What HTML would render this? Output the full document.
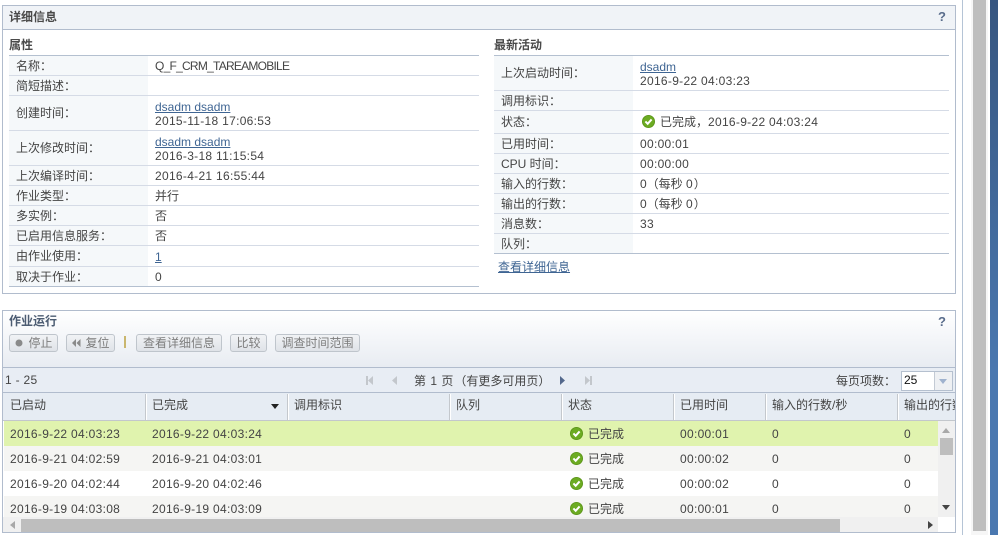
<!DOCTYPE html>
<html lang="zh"><head><meta charset="utf-8"><title>详细信息</title>
<style>
html,body{margin:0;padding:0;background:#fff}
#p{position:relative;width:998px;height:535px;overflow:hidden;background:#fff;font:12px/16px "Liberation Sans","WenQuanYi Zen Hei","Noto Sans CJK SC",sans-serif;color:#444}
#p div,#p a,#p svg{position:absolute}
.t{white-space:nowrap}
.n{letter-spacing:.3px}
a{color:#3f6593;text-decoration:underline}
#p a{position:static}
.b{font-weight:bold;color:#4a4a4a}
.l{height:1px;background:#d5dbe6}
.lm{height:1px;background:#b4c0d0}
.btn{top:334px;height:16px;border:1px solid #bfc5cc;border-radius:3px;background:linear-gradient(#f1f3f5,#dfe3e8);color:#7d7d7d;text-align:center;line-height:17px;white-space:nowrap}
.h{top:393px;height:27px;background:#e6ecf3}
.s{top:394px;width:1px;height:26px;background:#fff;box-shadow:-1px 0 0 #c4c8cd}
.row{left:4px;width:934px;height:25px}
</style></head><body><div id="p">
<!-- right chrome -->
<div style="left:962px;top:0;width:1px;height:535px;background:#b5c4d6"></div>
<div style="left:971px;top:0;width:17px;height:535px;background:#f6f6f6"></div>
<div style="left:973px;top:0;width:13px;height:531px;background:#bebebe"></div>
<div style="left:990px;top:0;width:8px;height:535px;background:linear-gradient(#375680,#4a78b0 70%)"></div>

<!-- panel 1 -->
<div style="left:2px;top:5px;width:952px;height:287px;border:1px solid #b1bccd;background:#fff"></div>
<div style="left:3px;top:6px;width:952px;height:23px;background:#f0f3f7;border-bottom:1px solid #b1bccd"></div>
<div class="t b" style="left:9px;top:9px">详细信息</div>
<div class="t" style="left:938px;top:9px;font-weight:bold;font-size:13px;color:#5a6d8c">?</div>
<div class="t b" style="left:9px;top:37px">属性</div>
<div class="t b" style="left:494px;top:37px">最新活动</div>

<div style="left:9px;top:56px;width:139px;height:230px;background:#f5f8fa"></div>
<div style="left:494px;top:56px;width:139px;height:197px;background:#f5f8fa"></div>

<div class="lm" style="left:9px;top:55px;width:470px"></div>
<div class="l" style="left:9px;top:75px;width:470px"></div>
<div class="l" style="left:9px;top:95px;width:470px"></div>
<div class="l" style="left:9px;top:130px;width:470px"></div>
<div class="l" style="left:9px;top:165px;width:470px"></div>
<div class="l" style="left:9px;top:185px;width:470px"></div>
<div class="l" style="left:9px;top:205px;width:470px"></div>
<div class="l" style="left:9px;top:225px;width:470px"></div>
<div class="l" style="left:9px;top:245px;width:470px"></div>
<div class="l" style="left:9px;top:266px;width:470px"></div>
<div class="lm" style="left:9px;top:286px;width:470px"></div>

<div class="t" style="left:16px;top:58px">名称：</div>
<div class="t" style="left:155px;top:58px;letter-spacing:-.75px">Q_F_CRM_TAREAMOBILE</div>
<div class="t" style="left:16px;top:78px">简短描述：</div>
<div class="t" style="left:16px;top:105px">创建时间：</div>
<div class="t" style="left:155px;top:99px"><a>dsadm dsadm</a></div>
<div class="t n" style="left:155px;top:113px">2015-11-18 17:06:53</div>
<div class="t" style="left:16px;top:140px">上次修改时间：</div>
<div class="t" style="left:155px;top:134px"><a>dsadm dsadm</a></div>
<div class="t n" style="left:155px;top:148px">2016-3-18 11:15:54</div>
<div class="t" style="left:16px;top:168px">上次编译时间：</div>
<div class="t n" style="left:155px;top:168px">2016-4-21 16:55:44</div>
<div class="t" style="left:16px;top:188px">作业类型：</div>
<div class="t" style="left:155px;top:188px">并行</div>
<div class="t" style="left:16px;top:208px">多实例：</div>
<div class="t" style="left:155px;top:208px">否</div>
<div class="t" style="left:16px;top:228px">已启用信息服务：</div>
<div class="t" style="left:155px;top:228px">否</div>
<div class="t" style="left:16px;top:248px">由作业使用：</div>
<div class="t" style="left:155px;top:249px"><a>1</a></div>
<div class="t" style="left:16px;top:269px">取决于作业：</div>
<div class="t" style="left:155px;top:269px">0</div>

<div class="lm" style="left:494px;top:55px;width:455px"></div>
<div class="l" style="left:494px;top:90px;width:455px"></div>
<div class="l" style="left:494px;top:110px;width:455px"></div>
<div class="l" style="left:494px;top:133px;width:455px"></div>
<div class="l" style="left:494px;top:153px;width:455px"></div>
<div class="l" style="left:494px;top:173px;width:455px"></div>
<div class="l" style="left:494px;top:193px;width:455px"></div>
<div class="l" style="left:494px;top:213px;width:455px"></div>
<div class="l" style="left:494px;top:233px;width:455px"></div>
<div class="lm" style="left:494px;top:253px;width:455px"></div>

<div class="t" style="left:501px;top:65px">上次启动时间：</div>
<div class="t" style="left:640px;top:59px"><a>dsadm</a></div>
<div class="t n" style="left:640px;top:73px">2016-9-22 04:03:23</div>
<div class="t" style="left:501px;top:93px">调用标识：</div>
<div class="t" style="left:501px;top:114px">状态：</div>
<svg style="left:642px;top:115px" width="13" height="13" viewBox="0 0 13 13"><circle cx="6.5" cy="6.5" r="6.1" fill="#6cab22" stroke="#5a9418" stroke-width=".8"/><path d="M3.4 6.400l2.300 2.400 3.900-4.400" fill="none" stroke="#fff" stroke-width="2"/></svg>
<div class="t" style="left:660px;top:114px">已完成，<span class="n">2016-9-22 04:03:24</span></div>
<div class="t" style="left:501px;top:136px">已用时间：</div>
<div class="t n" style="left:640px;top:136px">00:00:01</div>
<div class="t" style="left:501px;top:156px">CPU 时间：</div>
<div class="t n" style="left:640px;top:156px">00:00:00</div>
<div class="t" style="left:501px;top:176px">输入的行数：</div>
<div class="t" style="left:640px;top:176px">0（每秒 0<span style="margin-left:1px">）</span></div>
<div class="t" style="left:501px;top:196px">输出的行数：</div>
<div class="t" style="left:640px;top:196px">0（每秒 0<span style="margin-left:1px">）</span></div>
<div class="t" style="left:501px;top:216px">消息数：</div>
<div class="t n" style="left:640px;top:216px">33</div>
<div class="t" style="left:501px;top:236px">队列：</div>
<div class="t" style="left:498px;top:259px"><a>查看详细信息</a></div>

<!-- panel 2 -->
<div style="left:2px;top:310px;width:952px;height:221px;border:1px solid #b1bccd;background:#fff"></div>
<div style="left:3px;top:311px;width:952px;height:56px;background:linear-gradient(#fff,#e8ecf2);border-bottom:1px solid #b1bccd"></div>
<div class="t" style="left:9px;top:313px;font-weight:bold;color:#4c5c72">作业运行</div>
<div class="t" style="left:938px;top:314px;font-weight:bold;font-size:13px;color:#5a6d8c">?</div>

<div class="btn" style="left:9px;width:47px"><span style="margin-left:14px">停止</span></div>
<svg style="left:15px;top:339px" width="8" height="8"><circle cx="4" cy="4" r="3.500" fill="#8a8a8a"/></svg>
<div class="btn" style="left:66px;width:47px"><span style="margin-left:14px">复位</span></div>
<svg style="left:72px;top:339px" width="9" height="8"><path d="M4 0v8L0 4zM8.500 0v8L4.500 4z" fill="#8a8a8a"/></svg>
<div style="left:124px;top:336px;width:2px;height:12px;background:#c9b66e"></div>
<div class="btn" style="left:136px;width:84px">查看详细信息</div>
<div class="btn" style="left:230px;width:35px">比较</div>
<div class="btn" style="left:275px;width:83px">调查时间范围</div>

<div style="left:3px;top:368px;width:952px;height:24px;background:#e8edf4;border-bottom:1px solid #b1bccd"></div>
<div class="t n" style="left:5px;top:372px">1 - 25</div>
<svg style="left:366px;top:376px" width="8" height="9"><path d="M0 0h2v9H0zM7 0v9L2 4.500z" fill="#c3c7cc"/></svg>
<svg style="left:392px;top:376px" width="6" height="9"><path d="M5 0v9L0 4.500z" fill="#c3c7cc"/></svg>
<div class="t" style="left:414px;top:373px">第 <span style="margin:0 1px">1</span> 页<span style="margin-left:1px">（有更多可用页）</span></div>
<svg style="left:560px;top:376px" width="6" height="9"><path d="M0 0v9l5-4.500z" fill="#53688c"/></svg>
<svg style="left:585px;top:376px" width="8" height="9"><path d="M0 0v9l5-4.500zM5 0h2v9H5z" fill="#c3c7cc"/></svg>
<div class="t" style="left:836px;top:373px">每页项数：</div>
<div style="left:901px;top:371px;width:50px;height:18px;border:1px solid #b5c0cf;background:#fff"></div>
<div class="t" style="left:904px;top:372px;color:#111">25</div>
<div style="left:934px;top:372px;width:17px;height:18px;background:#eef0f3;border-left:1px solid #c3cad4"></div>
<svg style="left:939px;top:379px" width="8" height="5"><path d="M0 0h8L4 5z" fill="#9fb2ce"/></svg>

<div class="h" style="left:3px;width:952px"></div>
<div style="left:3px;top:420px;width:952px;height:1px;background:#c3c7cc"></div>
<div class="s" style="left:146px"></div>
<div class="s" style="left:288px"></div>
<div class="s" style="left:450px"></div>
<div class="s" style="left:562px"></div>
<div class="s" style="left:674px"></div>
<div class="s" style="left:766px"></div>
<div class="s" style="left:898px"></div>
<div class="t" style="left:10px;top:397px">已启动</div>
<div class="t" style="left:152px;top:397px">已完成</div>
<svg style="left:271px;top:404px" width="8" height="5"><path d="M0 0h8L4 5z" fill="#222"/></svg>
<div class="t" style="left:294px;top:397px">调用标识</div>
<div class="t" style="left:456px;top:397px">队列</div>
<div class="t" style="left:568px;top:397px">状态</div>
<div class="t" style="left:680px;top:397px">已用时间</div>
<div class="t" style="left:772px;top:397px">输入的行数/秒</div>
<div style="left:904px;top:397px;width:51px;height:16px;overflow:hidden;white-space:nowrap">输出的行数/秒</div>

<div class="row" style="top:421px;background:#e0f3ae"></div>
<div class="row" style="top:446px;background:#f5f5f3"></div>
<div class="row" style="top:471px;background:#fff"></div>
<div class="row" style="top:496px;height:21px;background:#f5f5f3"></div>

<div class="t n" style="left:10px;top:426px">2016-9-22 04:03:23</div><div class="t n" style="left:152px;top:426px">2016-9-22 04:03:24</div>
<div class="t n" style="left:10px;top:451px">2016-9-21 04:02:59</div><div class="t n" style="left:152px;top:451px">2016-9-21 04:03:01</div>
<div class="t n" style="left:10px;top:476px">2016-9-20 04:02:44</div><div class="t n" style="left:152px;top:476px">2016-9-20 04:02:46</div>
<div class="t n" style="left:10px;top:501px">2016-9-19 04:03:08</div><div class="t n" style="left:152px;top:501px">2016-9-19 04:03:09</div>

<svg style="left:570px;top:427px" width="13" height="13" viewBox="0 0 13 13"><circle cx="6.5" cy="6.5" r="6.1" fill="#6cab22" stroke="#5a9418" stroke-width=".8"/><path d="M3.400 6.400l2.300 2.400 3.900-4.400" fill="none" stroke="#fff" stroke-width="2"/></svg>
<svg style="left:570px;top:452px" width="13" height="13" viewBox="0 0 13 13"><circle cx="6.5" cy="6.5" r="6.1" fill="#6cab22" stroke="#5a9418" stroke-width=".8"/><path d="M3.400 6.400l2.300 2.400 3.900-4.400" fill="none" stroke="#fff" stroke-width="2"/></svg>
<svg style="left:570px;top:477px" width="13" height="13" viewBox="0 0 13 13"><circle cx="6.5" cy="6.5" r="6.1" fill="#6cab22" stroke="#5a9418" stroke-width=".8"/><path d="M3.400 6.400l2.300 2.400 3.900-4.400" fill="none" stroke="#fff" stroke-width="2"/></svg>
<svg style="left:570px;top:502px" width="13" height="13" viewBox="0 0 13 13"><circle cx="6.5" cy="6.5" r="6.1" fill="#6cab22" stroke="#5a9418" stroke-width=".8"/><path d="M3.400 6.400l2.300 2.400 3.900-4.400" fill="none" stroke="#fff" stroke-width="2"/></svg>
<div class="t" style="left:588px;top:426px">已完成</div><div class="t n" style="left:680px;top:426px">00:00:01</div><div class="t" style="left:772px;top:426px">0</div><div class="t" style="left:904px;top:426px">0</div>
<div class="t" style="left:588px;top:451px">已完成</div><div class="t n" style="left:680px;top:451px">00:00:02</div><div class="t" style="left:772px;top:451px">0</div><div class="t" style="left:904px;top:451px">0</div>
<div class="t" style="left:588px;top:476px">已完成</div><div class="t n" style="left:680px;top:476px">00:00:02</div><div class="t" style="left:772px;top:476px">0</div><div class="t" style="left:904px;top:476px">0</div>
<div class="t" style="left:588px;top:501px">已完成</div><div class="t n" style="left:680px;top:501px">00:00:01</div><div class="t" style="left:772px;top:501px">0</div><div class="t" style="left:904px;top:501px">0</div>

<!-- scrollbars -->
<div style="left:938px;top:421px;width:17px;height:96px;background:#f0f0f0"></div>
<div style="left:940px;top:438px;width:13px;height:17px;background:#bebebe"></div>
<svg style="left:942px;top:428px" width="8" height="5"><path d="M0 5h8L4 0z" fill="#a8a8a8"/></svg>
<svg style="left:942px;top:505px" width="8" height="5"><path d="M0 0h8L4 5z" fill="#444"/></svg>
<div style="left:3px;top:517px;width:935px;height:15px;background:#f0f0f0"></div>
<div style="left:21px;top:519px;width:819px;height:13px;background:#bebebe"></div>
<svg style="left:10px;top:521px" width="5" height="8"><path d="M5 0v8L0 4z" fill="#a8a8a8"/></svg>
<svg style="left:928px;top:521px" width="5" height="8"><path d="M0 0v8l5-4z" fill="#444"/></svg>
<div style="left:2px;top:532px;width:954px;height:1px;background:#b1bccd"></div>
</div></body></html>
